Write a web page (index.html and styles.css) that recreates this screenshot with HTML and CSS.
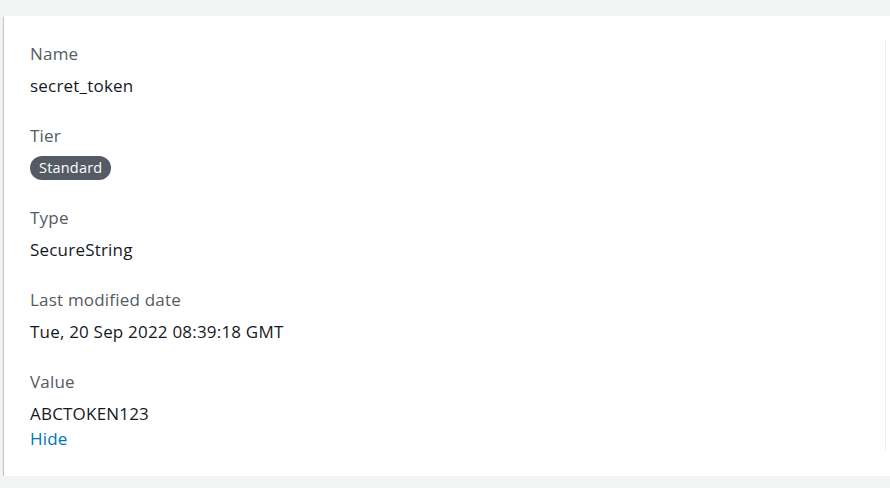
FILE: index.html
```html
<!DOCTYPE html>
<html lang="en">
<head>
    <meta charset="UTF-8">
    <meta name="viewport" content="width=device-width, initial-scale=1.0">
    <title>Parameter details</title>
    <link rel="stylesheet" href="styles.css">
</head>
<body>
<div class="container">
    <div class="details">
        <div class="column">
            <div class="field">
                <div class="label">Name</div>
                <div class="value">secret_token</div>
            </div>
            <div class="field">
                <div class="label">Tier</div>
                <div class="value"><span class="badge">Standard</span></div>
            </div>
            <div class="field">
                <div class="label">Type</div>
                <div class="value">SecureString</div>
            </div>
            <div class="field">
                <div class="label">Last modified date</div>
                <div class="value">Tue, 20 Sep 2022 08:39:18 GMT</div>
            </div>
            <div class="field">
                <div class="label">Value</div>
                <div class="value">ABCTOKEN123</div>
                <a href="#" class="link">Hide</a>
            </div>
        </div>
    </div>
</div>
</body>
</html>
```

FILE: styles.css
```css
body {
    font-family: "Open Sans", "Noto Sans", Arial, sans-serif;
    background-color: #f2f3f3;
    color: #16191f;
    margin: 0;
    padding: 0;
}
.container {
    margin: 16px 0 0 4px;
    width: 900px;
    background: #fff;
    box-shadow: 0 1px 1px 0 rgba(0, 28, 36, 0.3), 1px 1px 1px 0 rgba(0, 28, 36, 0.15), -1px 1px 1px 0 rgba(0, 28, 36, 0.15);
}
.details {
    padding: 24px 0 26px 0;
}
.column {
    width: 882px;
    border-right: 1px solid #eaeded;
    padding: 3px 0 0 26px;
    box-sizing: border-box;
}
.field {
    margin-bottom: 28px;
}
.field:last-child {
    margin-bottom: 0;
}
.label {
    font-size: 17px;
    letter-spacing: 0.2px;
    line-height: 22px;
    color: #545b64;
}
.value {
    font-size: 17px;
    letter-spacing: 0.2px;
    line-height: 22px;
    height: 22px;
    margin-top: 10px;
}
.badge {
    display: inline-block;
    vertical-align: top;
    margin: -1px 0;
    background-color: #545b64;
    color: #fff;
    font-size: 14.5px;
    letter-spacing: 0.2px;
    line-height: 24px;
    padding: 0 9px;
    border-radius: 12px;
}
.link {
    display: block;
    margin-top: 3px;
    font-size: 17px;
    letter-spacing: 0.2px;
    line-height: 22px;
    color: #0073bb;
    text-decoration: none;
}
```
